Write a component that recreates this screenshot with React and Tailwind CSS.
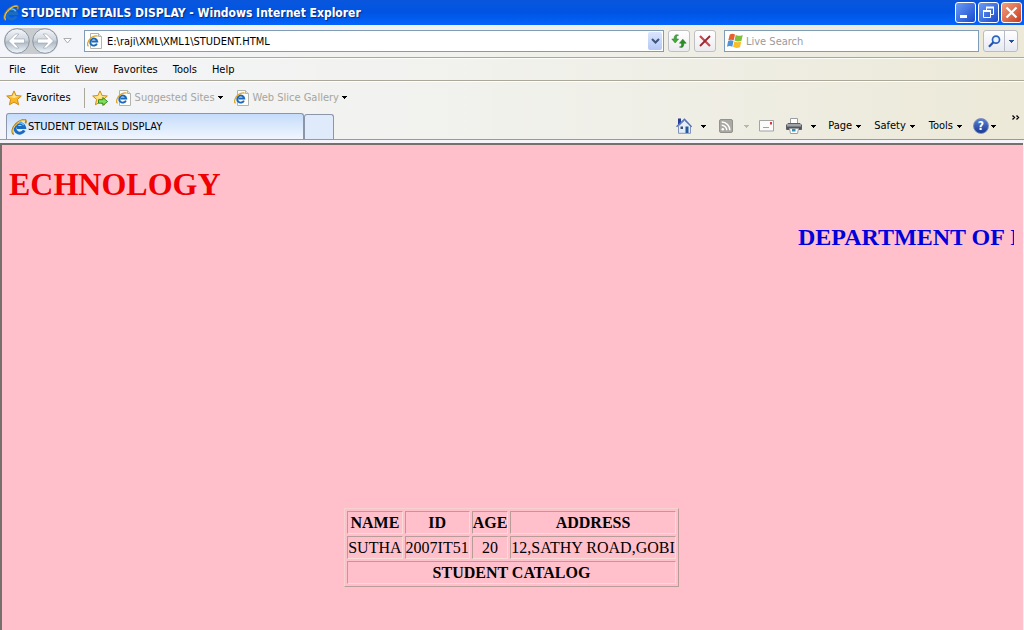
import React from "react";

const menus = ["File", "Edit", "View", "Favorites", "Tools", "Help"];

const student = { name: "SUTHA", id: "2007IT51", age: "20", address: "12,SATHY ROAD,GOBI" };

const IeGlyph = ({ className }) => (
  <svg viewBox="0 0 16 16" className={className} aria-hidden="true">
    <path d="M13.2 11.4A4.800 4.800 0 1 1 13.600 8.600H6" fill="none" stroke="#1b6cc0" strokeWidth="3" />
    <path d="M4.400 6.800A4.700 4.700 0 0 1 12.800 6.200" fill="none" stroke="#6cc4f6" strokeWidth="1.4" />
    <path d="M3 15C.2 14.400 1 9 5 5 8.600 1.500 13.400-.2 14.600 1.300c.5.8.3 2-.2 3" fill="none" stroke="#b08018" strokeWidth="1.8" />
    <path d="M3 14.600C.9 13.600 1.700 9 5.300 5.300 8.800 1.800 13.200.4 14.300 1.500" fill="none" stroke="#f6d565" strokeWidth="1" />
  </svg>
);

const IePage = () => (
  <svg viewBox="0 0 16 16" className="w-4 h-4 shrink-0" aria-hidden="true">
    <path d="M3.5.5h8l3 3v12h-11z" fill="#fdfdfb" stroke="#b4b4ae" />
    <path d="M11.5.5v3h3" fill="#e4e4de" stroke="#b4b4ae" />
    <path d="M9.900 10.600A3.500 3.500 0 1 1 10.200 8.500H4.500" fill="none" stroke="#1b68ba" strokeWidth="1.9" />
    <path d="M1.600 13.200C-.4 12.400.5 8.400 3.200 5.800c2.600-2.500 6.400-3.700 7.400-2.500" fill="none" stroke="#dca62c" strokeWidth="1.3" />
  </svg>
);

const Star = ({ arrow }) => (
  <svg viewBox="0 0 16 16" className="w-4 h-4 shrink-0" aria-hidden="true">
    <path d="M8 .9l2.1 4.6 5.2.5-3.9 3.5 1.2 5.3L8 12.1l-4.6 2.7 1.2-5.3L.7 6l5.2-.5z" fill={arrow ? "#fbdc75" : "#fbb829"} stroke="#d28a12" strokeLinejoin="round" />
    <path d="M8 2.8l1.4 3.4 3.6.4-5 1.5-4.8-1.4 3.4-.5z" fill="#ffe793" />
    {arrow && <path d="M6.5 9.7h4.3V7.5l4.8 4-4.8 4v-2.3H6.5z" fill="#7ce05c" stroke="#23841c" strokeWidth="0.9" />}
  </svg>
);

const Caret = ({ className = "text-black" }) => (
  <svg viewBox="0 0 5 3" className={`w-[5px] h-[3px] shrink-0 ${className}`} shapeRendering="crispEdges" aria-hidden="true">
    <path d="M0 0h5L2.5 3z" fill="currentColor" />
  </svg>
);

const NavButton = ({ label, back }) => (
  <button aria-label={label} className="w-[26px] h-[26px] shrink-0">
    <svg viewBox="0 0 26 26" className="w-[26px] h-[26px]">
      <defs>
        <linearGradient id={`nav-${label}`} x1="0" y1="0" x2="0" y2="1">
          <stop offset="0" stopColor="#f6f7f9" />
          <stop offset="0.45" stopColor="#cfd6dd" />
          <stop offset="0.55" stopColor="#b0bac5" />
          <stop offset="1" stopColor="#f2f9fd" />
        </linearGradient>
      </defs>
      <circle cx="13" cy="13" r="12.3" fill={`url(#nav-${label})`} stroke="#8b95a0" />
      <path
        d={back ? "M4.5 13l7-7h3.4l-4.6 5H20.5v4H10.3l4.6 5h-3.4z" : "M21.5 13l-7-7h-3.4l4.6 5H5.5v4h10.2l-4.6 5h3.4z"}
        fill="#fff"
        stroke="#93a0ae"
        strokeWidth="0.6"
      />
    </svg>
  </button>
);

const WindowButton = ({ label, color, children }) => (
  <button aria-label={label} className={`w-[21px] h-[21px] rounded-[3px] border border-white bg-gradient-to-br ${color}`}>
    <svg viewBox="0 0 19 19" className="w-[19px] h-[19px]" fill="none" stroke="#fff">
      {children}
    </svg>
  </button>
);

const TitleBar = () => (
  <header className="flex items-center h-[25px] pl-[3px] pr-0.5 bg-linear-to-b from-[#0a56dc] via-[#0054e3] to-[#0464fc]">
    <IeGlyph className="w-4 h-4 shrink-0" />
    <h1 className="flex-1 ml-0.5 text-[12px] leading-4 font-bold text-white whitespace-nowrap [text-shadow:1px_1px_1px_#0a2a80]">
      STUDENT DETAILS DISPLAY - Windows Internet Explorer
    </h1>
    <div className="flex gap-0.5">
      <WindowButton label="Minimize" color="from-[#6c9bf5] to-[#1a46cc]">
        <path d="M4 13.5h7" strokeWidth="3" />
      </WindowButton>
      <WindowButton label="Restore" color="from-[#6c9bf5] to-[#1a46cc]">
        <path d="M7.5 7V4.5h7v7H12" />
        <path d="M7 4.5h8M4 8h8" strokeWidth="2" />
        <path d="M4.5 8v6.5h7V8" />
      </WindowButton>
      <WindowButton label="Close" color="from-[#f0a080] to-[#c8381a]">
        <path d="M4.5 4.5l10 10M14.5 4.5l-10 10" strokeWidth="2.2" />
      </WindowButton>
    </div>
  </header>
);

const AddressBar = () => (
  <div className="flex items-center h-[33px] pl-1 pr-1.5 border-b border-[#aca899]">
    <div className="flex gap-0.5 rounded-full bg-[#c9cccf]">
      <NavButton label="Back" back />
      <NavButton label="Forward" />
    </div>
    <button aria-label="Recent pages" className="ml-[5px] shrink-0">
      <svg viewBox="0 0 9 6" className="w-[9px] h-1.5">
        <path d="M.8.5h7.4L4.5 5z" fill="#fff" stroke="#a9aeb4" />
      </svg>
    </button>
    <div className="flex flex-1 items-center h-[22px] ml-3 pl-0.5 pr-px bg-white border border-[#7f9db9]">
      <IePage />
      <input
        aria-label="Address"
        defaultValue="E:\raji\XML\XML1\STUDENT.HTML"
        className="flex-1 min-w-0 ml-1 pt-0.5 text-[11px] leading-4 outline-none"
      />
      <button aria-label="Show address list" className="flex items-center justify-center w-3.5 h-[18px] rounded-[2px] bg-linear-to-b from-[#dbe6fd] to-[#b4c8f5]">
        <svg viewBox="0 0 9 6" className="w-[9px] h-1.5">
          <path d="M1 1l3.5 3.5L8 1" fill="none" stroke="#3f547f" strokeWidth="2" />
        </svg>
      </button>
    </div>
    <button aria-label="Refresh" className="flex items-center justify-center w-[22px] h-[22px] ml-1 rounded-[3px] border border-[#c0c0c4] bg-linear-to-b from-white to-[#ececf0]">
      <svg viewBox="0 0 16 16" className="w-4 h-4 shrink-0">
        <path d="M7.6 2.2C5.6 2.2 5.4 3.6 5.4 6H7.6L4.2 10 .8 6h2.3C3.1 2.6 4.4.9 7.6 2.2z" fill="#43ab35" stroke="#1f7b1d" strokeWidth="0.5" />
        <path d="M8.4 14c2 0 2.2-1.4 2.2-3.8H8.4l3.4-4 3.4 4h-2.3c0 3.4-1.3 5.1-4.5 3.8z" fill="#2d8d27" stroke="#176a17" strokeWidth="0.5" />
      </svg>
    </button>
    <button aria-label="Stop" className="flex items-center justify-center w-[22px] h-[22px] ml-1 rounded-[3px] border border-[#c0c0c4] bg-linear-to-b from-white to-[#ececf0]">
      <svg viewBox="0 0 12 12" className="w-3 h-3">
        <path d="M1 1l10 10" fill="none" stroke="#c9474a" strokeWidth="2.2" />
        <path d="M11 1L1 11" fill="none" stroke="#98282f" strokeWidth="1.8" />
      </svg>
    </button>
    <div className="flex items-center w-[255px] h-[22px] ml-2 pl-0.5 bg-white border border-[#7f9db9]">
      <svg viewBox="0 0 16 16" className="w-4 h-4 shrink-0" aria-hidden="true">
        <path d="M2.8 1.5C4.5.4 6.3.5 8 1.5L6.7 7.3C5 6.4 3.3 6.4 1.3 7.3z" fill="#e8602c" />
        <path d="M8.7 2c2 1 4.2 1 7-.1L14.500 7.700c-2.500 1-4.700 1-7-.1z" fill="#7fbf3c" />
        <path d="M1.1 8C3 7.1 4.8 7.2 6.5 8.1L5.3 13.8C3.7 12.9 2 12.9 0 13.7z" fill="#4c94da" />
        <path d="M7.3 8.4c2.2 1 4.5 1 7 0L13 14.2c-2.5 1-4.8.9-7-.1z" fill="#f8bd2b" />
      </svg>
      <input aria-label="Live Search" placeholder="Live Search" className="flex-1 min-w-0 ml-[3px] pt-0.5 text-[11px] leading-4 outline-none placeholder:text-[#9a9a9a]" />
    </div>
    <div className="flex h-[22px] ml-1 rounded-[3px] border border-[#b9bcc6] bg-linear-to-b from-white to-[#e6e9f2]">
      <button aria-label="Search" className="flex items-center justify-center w-5">
        <svg viewBox="0 0 13 13" className="w-[13px] h-[13px]">
          <circle cx="8" cy="4.7" r="3.5" fill="#eaf4ff" stroke="#2a62c0" strokeWidth="1.7" />
          <path d="M5.4 7.3L1 11.8" stroke="#2352ae" strokeWidth="2.2" />
        </svg>
      </button>
      <button aria-label="Search options" className="flex items-center justify-center w-[13px] border-l border-[#b9bcc6]">
        <Caret className="text-[#24529c]" />
      </button>
    </div>
  </div>
);

const MenuBar = () => (
  <nav className="flex items-center gap-[15px] h-[23px] pl-[9px] border-t border-t-[#fbfbf8] border-b border-b-[#aca899]">
    {menus.map((item) => (
      <button key={item}>{item}</button>
    ))}
  </nav>
);

const FavoritesBar = () => (
  <div className="flex items-center h-8 pl-1.5 border-t border-white">
    <button className="flex items-center gap-1">
      <Star />
      Favorites
    </button>
    <div className="w-px h-5 ml-[13px] mr-[7px] bg-[#aca899]" />
    <button aria-label="Add to Favorites Bar">
      <Star arrow />
    </button>
    <button className="flex items-center gap-[3px] ml-2 text-[#a5a59c]">
      <IePage />
      Suggested Sites
      <Caret />
    </button>
    <button className="flex items-center gap-[3px] ml-[11px] text-[#a5a59c]">
      <IePage />
      Web Slice Gallery
      <Caret />
    </button>
  </div>
);

const HomeIcon = () => (
  <svg viewBox="0 0 16 16" className="w-4 h-4">
    <path d="M2 .5h3v6H2z" fill="#243d96" />
    <path d="M2.5 8L8.5 2.5 14.5 8v7.3h-12z" fill="#e5ebf7" stroke="#8294bc" />
    <path d="M.5 8.8L8.5 1.2l7.2 7.6" fill="none" stroke="#5670bb" strokeWidth="1.3" />
    <path d="M4.500 8.500H7V11H4.500z" fill="#38506f" />
    <path d="M9.5 8.5h3v6.5h-3z" fill="#24599b" />
  </svg>
);

const FeedIcon = () => (
  <svg viewBox="0 0 14 14" className="w-3.5 h-3.5">
    <rect x="0.5" y="0.5" width="13" height="13" rx="1.5" fill="#aaa9a4" stroke="#93928d" />
    <circle cx="3.8" cy="10.3" r="1.3" fill="#fff" />
    <path d="M2.7 6.2a5.1 5.1 0 0 1 5.1 5.1M2.7 3.1a8.2 8.2 0 0 1 8.2 8.2" fill="none" stroke="#fff" strokeWidth="1.5" />
  </svg>
);

const MailIcon = () => (
  <svg viewBox="0 0 15 12" className="w-[15px] h-3">
    <path d="M.5.5h14v10.5H.5z" fill="#fafafa" stroke="#a3a3a3" />
    <path d="M4 7.5h6" stroke="#a0a0a0" />
    <path d="M11 2h2v2.5h-2z" fill="#d23b3b" />
  </svg>
);

const PrinterIcon = () => (
  <svg viewBox="0 0 16 16" className="w-4 h-4">
    <path d="M4.5.5h7v6h-7z" fill="#fff" stroke="#9a9ea3" />
    <path d="M.5 7l1.5-1.5h12L15.5 7v4.5H.5z" fill="#7a7f85" stroke="#5a5e63" />
    <path d="M1 7h14" stroke="#c4c8cc" />
    <path d="M1 10h14" stroke="#44484d" strokeWidth="1.5" />
    <path d="M3.5 10.5h9l-1 5h-7z" fill="#fff" stroke="#9a9ea3" />
    <path d="M6 11h3.5v2.5H6z" fill="#2f8fb4" />
  </svg>
);

const TabRow = () => (
  <div className="flex h-[27px] pl-1.5 border-b border-[#929aa8]">
    <div className="flex flex-1">
      <button className="flex items-center gap-px w-[298px] h-[26px] pl-1 rounded-t-[3px] border border-b-0 border-[#8b96a8] bg-linear-to-b from-[#c5dcfa] to-[#f1f6fe] whitespace-nowrap">
        <IeGlyph className="w-4 h-4 shrink-0" />
        STUDENT DETAILS DISPLAY
      </button>
      <button aria-label="New Tab" className="self-end w-[30px] h-[25px] rounded-t-[3px] border border-b-0 border-[#8b96a8] bg-[#dfebfb]" />
    </div>
    <div className="flex items-center shrink-0 pr-1">
      <button aria-label="Home" className="flex items-center gap-[9px]">
        <HomeIcon />
        <Caret />
      </button>
      <button aria-label="Feeds" className="flex items-center gap-[11px] ml-[13px]">
        <FeedIcon />
        <Caret className="text-[#b9b7ab]" />
      </button>
      <button aria-label="Read Mail" className="ml-2.5">
        <MailIcon />
      </button>
      <button aria-label="Print" className="flex items-center gap-[9px] ml-3">
        <PrinterIcon />
        <Caret />
      </button>
      <button className="flex items-center gap-1 ml-3">Page <Caret /></button>
      <button className="flex items-center gap-1 ml-[13px]">Safety <Caret /></button>
      <button className="flex items-center gap-1 ml-3.5">Tools <Caret /></button>
      <button aria-label="Help" className="flex items-center gap-0.5 ml-[11px]">
        <span className="flex items-center justify-center w-4 h-4 rounded-full border border-[#7b8dbd] bg-linear-to-b from-[#5a7fd2] to-[#183b93] text-[12px] leading-3 font-bold text-white">
          ?
        </span>
        <Caret />
      </button>
      <button aria-label="More commands" className="self-start ml-4">
        <svg viewBox="0 0 8 5" className="w-2 h-[5px] mt-0.5">
          <path d="M.5.5l2 2-2 2M4.5.5l2 2-2 2" fill="none" stroke="#000" strokeWidth="1.3" />
        </svg>
      </button>
    </div>
  </div>
);

const StudentTable = () => (
  <table className="mx-auto border-separate border-spacing-0.5 border border-t-[#f6d3d0] border-l-[#f6d3d0] border-b-[#b79c98] border-r-[#b79c98] text-base leading-[19px] text-center whitespace-nowrap [&_td]:border [&_th]:border [&_td]:py-px [&_th]:py-px [&_td]:border-t-[#b79c98] [&_td]:border-l-[#b79c98] [&_td]:border-b-[#f8dcd8] [&_td]:border-r-[#f8dcd8] [&_th]:border-t-[#b79c98] [&_th]:border-l-[#b79c98] [&_th]:border-b-[#f8dcd8] [&_th]:border-r-[#f8dcd8]">
    <thead>
      <tr>
        <th>NAME</th>
        <th>ID</th>
        <th>AGE</th>
        <th>ADDRESS</th>
      </tr>
    </thead>
    <tbody>
      <tr>
        <td>{student.name}</td>
        <td>{student.id}</td>
        <td>{student.age}</td>
        <td>{student.address}</td>
      </tr>
    </tbody>
    <tfoot>
      <tr>
        <th colSpan={4}>STUDENT CATALOG</th>
      </tr>
    </tfoot>
  </table>
);

export default function App() {
  return (
    <div className="flex flex-col min-h-screen bg-[#f4f4fa] font-['DejaVu_Sans_Condensed','DejaVu_Sans',sans-serif] text-[11px] leading-4 text-black">
      <TitleBar />
      <div className="bg-linear-to-r from-[#f4f5fa] via-[#f1f1ec] to-[#ece9d8]">
        <AddressBar />
        <MenuBar />
        <FavoritesBar />
        <TabRow />
      </div>

      {/* Document */}
      <main className="flex-1 mt-[3px] mr-px pl-[7px] pr-[9px] border-t-2 border-l-2 border-[#76706c] bg-[#ffc0cb] font-['Liberation_Serif',serif]">
        <h1 className="mt-[21px] text-[32px] leading-9 font-bold text-[#f00000]">ECHNOLOGY</h1>
        <div className="flex justify-end mt-[21px]">
          <h2 className="w-[216px] overflow-hidden whitespace-nowrap text-2xl leading-7 font-bold text-[#0000dd]">
            DEPARTMENT OF I
          </h2>
        </div>
        <div className="mt-[257px]">
          <StudentTable />
        </div>
      </main>
    </div>
  );
}
